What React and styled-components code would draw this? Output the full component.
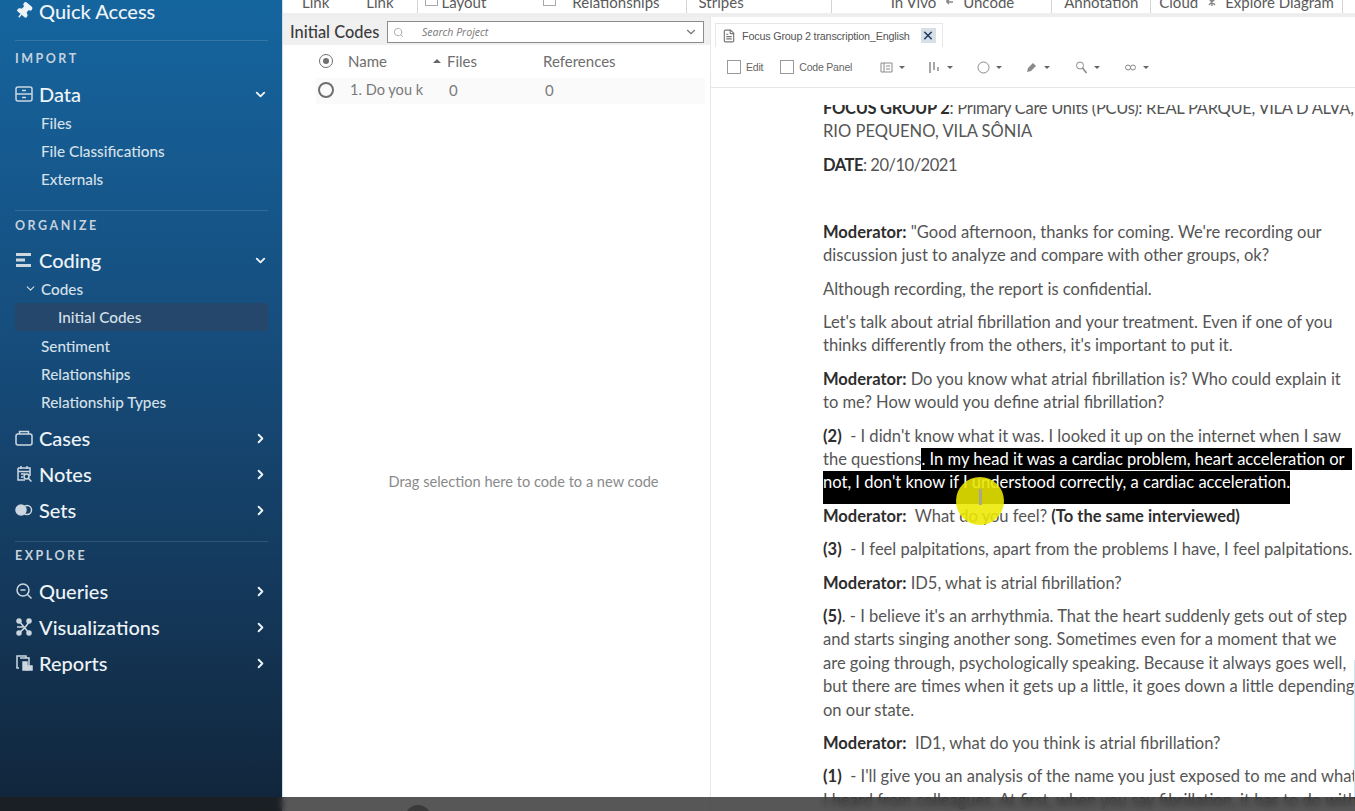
import styled, { createGlobalStyle } from 'styled-components';
import { Pin, ChevronDown, ChevronRight, Search, FileText, X } from 'lucide-react';

const GlobalStyle = createGlobalStyle`
    html, body, #root {
        margin: 0;
        height: 100%;
    }
    body {
        overflow: hidden;
        font-family: "Lato", "Liberation Sans", sans-serif;
        background: #ffffff;
    }
`;

//____________PAGE____________
const Page = styled.div`
    position: relative;
    display: flex;
    width: 1355px;
    height: 811px;
    overflow: hidden;
`;
const Workspace = styled.div`
    flex: 1;
    min-width: 0;
    display: flex;
    flex-direction: column;
    border-left: 1px solid #cddcea;
    background: #ffffff;
`;
const Panes = styled.div`
    flex: 1;
    min-height: 0;
    display: flex;
`;
const BottomBar = styled.div`
    position: absolute;
    left: 0;
    right: 0;
    bottom: 0;
    height: 14px;
    overflow: hidden;
    background: rgba(30, 30, 30, 0.745);
    backdrop-filter: blur(3px);
`;
const BarKnob = styled.span`
    position: absolute;
    left: 405px;
    top: 8px;
    width: 26px;
    height: 26px;
    border-radius: 50%;
    background: #3a3a3a;
`;
const EdgeLine = styled.div`
    position: absolute;
    right: 0;
    top: 660px;
    width: 1px;
    height: 137px;
    background: #cfe6ee;
`;
//____________PAGE____________

//____________SIDEBAR____________
const Sidebar = styled.aside`
    flex: 0 0 282px;
    height: 100%;
    box-sizing: border-box;
    padding: 0 14px 0 15px;
    background: linear-gradient(180deg, #15659f 0%, #164e7e 40%, #14395c 72%, #11253a 100%);
    color: #eef3f7;
`;
const SideList = styled.nav`
    margin-top: -7px;
`;
const MainRow = styled.div`
    display: flex;
    align-items: center;
    height: 36px;
    font-size: 20px;
    font-weight: 500;
    color: #eef3f7;
    svg.lead {
        flex: 0 0 18px;
        width: 18px;
        height: 18px;
        margin-right: 6px;
        color: #ccd7e0;
    }
    svg.pin {
        color: #eef3f7;
        transform: rotate(40deg);
    }
    svg.tail {
        margin-left: auto;
        width: 15px;
        height: 15px;
    }
`;
const Divider = styled.div`
    height: 1px;
    margin-top: ${(p) => p.$top}px;
    background: rgba(255, 255, 255, 0.13);
`;
const SectionLabel = styled.div`
    height: 18px;
    line-height: 18px;
    margin-top: ${(p) => p.$top}px;
    margin-bottom: ${(p) => p.$bottom}px;
    font-size: 12.5px;
    font-weight: 700;
    letter-spacing: 2.5px;
    color: #c4d2de;
`;
const SubList = styled.div`
    margin-top: -3.5px;
    margin-bottom: 3.5px;
`;
const SubRow = styled.div`
    display: flex;
    align-items: center;
    height: 28.4px;
    padding-left: ${(p) => p.$indent || 26}px;
    font-size: 15.3px;
    font-weight: 500;
    color: #d5e0e9;
    background: ${(p) => (p.$active ? '#24476b' : 'transparent')};
    border-radius: 2px;
    svg {
        width: 13px;
        height: 13px;
        margin-left: -17px;
        margin-right: 4px;
    }
`;
//____________SIDEBAR____________

//____________RIBBON____________
const Ribbon = styled.div`
    flex: 0 0 13px;
    display: flex;
    align-items: center;
    height: 13px;
    overflow: hidden;
    background: #ffffff;
    font-size: 15px;
    color: #5a5a5a;
`;
const RibbonItem = styled.span`
    flex: 0 0 auto;
    margin-top: -9px;
    margin-left: ${(p) => p.$left}px;
    white-space: nowrap;
`;
const RibbonRule = styled.span`
    flex: 0 0 1px;
    height: 13px;
    margin-left: ${(p) => p.$left}px;
    background: #d4d4d4;
`;
const RibbonBox = styled.span`
    flex: 0 0 11px;
    height: 11px;
    margin-top: -14px;
    margin-left: ${(p) => p.$left}px;
    border: 1px solid #aaaaaa;
`;
const RibbonGlyph = styled.svg`
    flex: 0 0 8px;
    width: 8px;
    height: 8px;
    margin-top: -9px;
    margin-left: ${(p) => p.$left}px;
    fill: none;
    stroke: #888888;
    stroke-width: 1.4;
`;
const RibbonGap = styled.div`
    flex: 0 0 4px;
    background: #eeeeee;
`;
//____________RIBBON____________

//____________CODES PANE____________
const CodesPane = styled.section`
    position: relative;
    flex: 0 0 427px;
    display: flex;
    flex-direction: column;
    border-right: 1px solid #e6e6e6;
`;
const CodesHeader = styled.div`
    display: flex;
    align-items: center;
    box-sizing: border-box;
    height: 28px;
    padding: 2px 0 0 7px;
    background: #f0f0f0;
`;
const CodesTitle = styled.span`
    flex: 0 0 97px;
    margin-top: -2px;
    font-size: 16.4px;
    font-weight: 500;
    color: #3c3c3c;
`;
const SearchBox = styled.div`
    flex: 0 0 317px;
    box-sizing: border-box;
    display: flex;
    align-items: center;
    height: 22px;
    padding: 0 5px;
    border: 1px solid #8c8c8c;
    background: #ffffff;
    color: #777777;
    font-family: "Open Sans", sans-serif;
    font-size: 10.5px;
    font-style: italic;
    svg.glass {
        width: 11px;
        height: 11px;
        margin-right: 18px;
        color: #aaaaaa;
    }
    svg.arrow {
        margin-left: auto;
        width: 14px;
        height: 14px;
    }
`;
const CodesGrid = styled.div`
    display: grid;
    grid-template-columns: 32px 99px 96px 1fr;
    align-items: center;
    box-sizing: border-box;
    width: 389px;
    height: ${(p) => p.$height}px;
    margin-left: 33px;
    padding-bottom: ${(p) => (p.$row ? 3 : 1)}px;
    font-size: 15px;
    color: ${(p) => (p.$row ? '#7a7a7a' : '#6e6e6e')};
    background: ${(p) => (p.$row ? '#fafafa' : 'transparent')};
`;
const RadioMark = styled.span`
    box-sizing: border-box;
    display: flex;
    align-items: center;
    justify-content: center;
    width: ${(p) => (p.$big ? 16 : 14)}px;
    height: ${(p) => (p.$big ? 16 : 14)}px;
    margin-left: ${(p) => (p.$big ? 2 : 3)}px;
    border: ${(p) => (p.$big ? 2 : 1)}px solid #6f6f6f;
    border-radius: 50%;
    &::after {
        content: '';
        display: ${(p) => (p.$big ? 'none' : 'block')};
        width: 6px;
        height: 6px;
        border-radius: 50%;
        background: #6f6f6f;
    }
`;
const CodeName = styled.span`
    padding-left: 2px;
    font-size: 14.6px;
    white-space: nowrap;
`;
const CountCell = styled.span`
    padding-left: 2px;
`;
const SortName = styled.span`
    display: flex;
    align-items: center;
    &::after {
        content: '';
        margin-left: 46px;
        border-left: 4px solid transparent;
        border-right: 4px solid transparent;
        border-bottom: 4px solid #666666;
    }
`;
const DropHint = styled.div`
    flex: 1;
    box-sizing: border-box;
    padding: 369px 0 0 54px;
    text-align: center;
    font-size: 14.6px;
    color: #8a8a8a;
`;
//____________CODES PANE____________

//____________DOCUMENT PANE____________
const DocPane = styled.section`
    position: relative;
    flex: 1;
    min-width: 0;
    display: flex;
    flex-direction: column;
`;
const TabBar = styled.div`
    display: flex;
    align-items: flex-end;
    height: 30px;
    padding-left: 4px;
`;
const Tab = styled.div`
    box-sizing: border-box;
    display: flex;
    align-items: center;
    width: 228px;
    height: 24px;
    padding-left: 6px;
    border: 1px solid #e6e6e6;
    border-bottom: none;
    font-family: "Liberation Sans", sans-serif;
    font-size: 10.8px;
    letter-spacing: -0.2px;
    color: #555555;
    svg {
        flex: 0 0 14px;
        width: 14px;
        height: 14px;
        margin-right: 6px;
        color: #777777;
    }
`;
const TabClose = styled.span`
    display: flex;
    align-items: center;
    justify-content: center;
    width: 15px;
    height: 15px;
    margin-left: 11px;
    background: #d9dfe7;
    svg {
        width: 13px;
        height: 13px;
        margin: 0;
        color: #1f3f68;
        stroke-width: 3;
    }
`;
const DocTools = styled.div`
    display: flex;
    align-items: center;
    box-sizing: border-box;
    height: 41px;
    padding-left: 16px;
    border-bottom: 1px solid #e6e6e6;
    font-family: "Liberation Sans", sans-serif;
    font-size: 10.5px;
    letter-spacing: -0.2px;
    color: #666666;
`;
const ToolCheck = styled.span`
    display: flex;
    align-items: center;
    margin-right: 17px;
    &::before {
        content: '';
        width: 12px;
        height: 12px;
        margin-right: 5px;
        border: 1px solid #999999;
    }
`;
const ToolIcon = styled.span`
    display: flex;
    align-items: center;
    margin-left: ${(p) => p.$left}px;
    color: #8a8a8a;
    svg {
        width: 13px;
        height: 13px;
    }
    &::after {
        content: '';
        margin-left: 6px;
        border-left: 3px solid transparent;
        border-right: 3px solid transparent;
        border-top: 3px solid #666666;
    }
`;
const DocViewport = styled.div`
    flex: 1;
    min-height: 0;
    margin-top: 17px;
    overflow: hidden;
`;
const DocBody = styled.article`
    margin-top: -8.1px;
    padding-left: 112px;
    font-size: 16.55px;
    line-height: 23.4px;
    white-space: nowrap;
    color: #555555;
    b {
        font-weight: 700;
        color: #2e2e2e;
    }
`;
const Para = styled.p`
    margin: 0 0 ${(p) => p.$after ?? 10}px;
`;
const TightLine = styled.span`
    letter-spacing: ${(p) => p.$spacing}px;
`;
const Marked = styled.span`
    display: inline-block;
    box-sizing: border-box;
    height: ${(p) => (p.$tall ? 33 : 22)}px;
    margin-bottom: ${(p) => (p.$tall ? -10 : 0)}px;
    padding-right: ${(p) => (p.$tall ? 0 : 3)}px;
    vertical-align: top;
    background: #000000;
    color: #ffffff;
`;
const Pointer = styled.div`
    position: absolute;
    left: 245px;
    top: 460px;
    width: 48px;
    height: 48px;
    border-radius: 50%;
    background: rgba(236, 232, 0, 0.88);
    &::after {
        content: '';
        position: absolute;
        left: 23px;
        top: 12px;
        width: 3px;
        height: 16px;
        background: #a8a88a;
    }
`;
//____________DOCUMENT PANE____________

const LineIcon = ({ className = 'lead', children }) => (
    <svg className={className} viewBox="0 0 18 18" fill="none" stroke="currentColor" strokeWidth="1.5">
        {children}
    </svg>
);

const DataIcon = () => (
    <LineIcon>
        <rect x="1" y="2" width="16" height="14" rx="2" />
        <path d="M1 9h16M7 5.5h4M7 12.5h4" />
    </LineIcon>
);
const CodingIcon = () => (
    <LineIcon>
        <path d="M1 3.5h15M1 9h9M1 14.5h15" strokeWidth="3" />
    </LineIcon>
);
const CasesIcon = () => (
    <LineIcon>
        <rect x="1" y="5" width="16" height="11" rx="2" />
        <path d="M4.5 5V2.5h9V5" />
    </LineIcon>
);
const NotesIcon = () => (
    <LineIcon>
        <path d="M3 3h12v8M3 3v12h7M3 6.5h12M6 1v3M12 1v3M6 9h4M6 12h2" />
        <circle cx="11.5" cy="11.5" r="2.5" />
        <path d="M13.5 13.5l3 3" />
    </LineIcon>
);
const SetsIcon = () => (
    <LineIcon>
        <circle cx="12" cy="9" r="4.5" />
        <circle cx="6" cy="9" r="5" fill="currentColor" />
    </LineIcon>
);
const QueriesIcon = () => (
    <LineIcon>
        <circle cx="8" cy="8" r="6" />
        <path d="M5.5 8h5M12.5 12.5l4 4" />
    </LineIcon>
);
const VizIcon = () => (
    <LineIcon>
        <path d="M4 3l10 12M14 3c-1 4-4 7-10 12M2 9h6" />
        <circle cx="4" cy="3" r="2" fill="currentColor" />
        <circle cx="14" cy="3" r="2" fill="currentColor" />
        <circle cx="4" cy="15" r="2" fill="currentColor" />
        <circle cx="14" cy="15" r="2" fill="currentColor" />
    </LineIcon>
);
const ReportsIcon = () => (
    <LineIcon>
        <path d="M4 14H2V2h9v2M5 4h9v10" />
        <rect x="8" y="8" width="4" height="8" fill="currentColor" />
        <rect x="12" y="12" width="5" height="4" fill="currentColor" />
    </LineIcon>
);

const Chevron = styled(ChevronRight).attrs({ className: 'tail', strokeWidth: 3 })``;
const ChevronOpen = styled(ChevronDown).attrs({ className: 'tail', strokeWidth: 3 })``;

export default function App() {
    return (
        <Page>
            <GlobalStyle />
            <Sidebar>
                <SideList>
                    <MainRow>
                        <Pin className="lead pin" fill="currentColor" />
                        Quick Access
                    </MainRow>
                    <Divider $top={11} />
                    <SectionLabel $top={9} $bottom={8}>IMPORT</SectionLabel>
                    <MainRow><DataIcon />Data<ChevronOpen /></MainRow>
                    <SubList>
                        <SubRow>Files</SubRow>
                        <SubRow>File Classifications</SubRow>
                        <SubRow>Externals</SubRow>
                    </SubList>
                    <Divider $top={16.5} />
                    <SectionLabel $top={6} $bottom={7}>ORGANIZE</SectionLabel>
                    <MainRow><CodingIcon />Coding<ChevronOpen /></MainRow>
                    <SubList>
                        <SubRow><ChevronDown />Codes</SubRow>
                        <SubRow $active $indent={43}>Initial Codes</SubRow>
                        <SubRow>Sentiment</SubRow>
                        <SubRow>Relationships</SubRow>
                        <SubRow>Relationship Types</SubRow>
                    </SubList>
                    <MainRow><CasesIcon />Cases<Chevron /></MainRow>
                    <MainRow><NotesIcon />Notes<Chevron /></MainRow>
                    <MainRow><SetsIcon />Sets<Chevron /></MainRow>
                    <Divider $top={13} />
                    <SectionLabel $top={5} $bottom={8}>EXPLORE</SectionLabel>
                    <MainRow><QueriesIcon />Queries<Chevron /></MainRow>
                    <MainRow><VizIcon />Visualizations<Chevron /></MainRow>
                    <MainRow><ReportsIcon />Reports<Chevron /></MainRow>
                </SideList>
            </Sidebar>

            <Workspace>
                <Ribbon>
                    <RibbonItem $left={19}>Link</RibbonItem>
                    <RibbonItem $left={37}>Link</RibbonItem>
                    <RibbonRule $left={23} />
                    <RibbonBox $left={7} />
                    <RibbonItem $left={4}>Layout</RibbonItem>
                    <RibbonBox $left={57} />
                    <RibbonItem $left={16}>Relationships</RibbonItem>
                    <RibbonRule $left={26} />
                    <RibbonItem $left={12}>Stripes</RibbonItem>
                    <RibbonRule $left={87} />
                    <RibbonItem $left={59}>In Vivo</RibbonItem>
                    <RibbonGlyph $left={10} viewBox="0 0 8 8"><path d="M1 1v3h6M3 2L1 4l2 2" /></RibbonGlyph>
                    <RibbonItem $left={9}>Uncode</RibbonItem>
                    <RibbonRule $left={37} />
                    <RibbonItem $left={12}>Annotation</RibbonItem>
                    <RibbonRule $left={12} />
                    <RibbonItem $left={8}>Cloud</RibbonItem>
                    <RibbonGlyph $left={10} viewBox="0 0 8 8"><path d="M1 1l6 6M7 1L1 7M4 0v8" /></RibbonGlyph>
                    <RibbonItem $left={9}>Explore Diagram</RibbonItem>
                    <RibbonRule $left={8} />
                </Ribbon>
                <RibbonGap />
                <Panes>
                    <CodesPane>
                        <CodesHeader>
                            <CodesTitle>Initial Codes</CodesTitle>
                            <SearchBox>
                                <Search className="glass" />
                                Search Project
                                <ChevronDown className="arrow" />
                            </SearchBox>
                        </CodesHeader>
                        <CodesGrid $height={33}>
                            <RadioMark />
                            <SortName>Name</SortName>
                            <span>Files</span>
                            <span>References</span>
                        </CodesGrid>
                        <CodesGrid $height={26} $row>
                            <RadioMark $big />
                            <CodeName>1. Do you k</CodeName>
                            <CountCell>0</CountCell>
                            <CountCell>0</CountCell>
                        </CodesGrid>
                        <DropHint>Drag selection here to code to a new code</DropHint>
                    </CodesPane>

                    <DocPane>
                        <TabBar>
                            <Tab>
                                <FileText />
                                Focus Group 2 transcription_English
                                <TabClose><X /></TabClose>
                            </Tab>
                        </TabBar>
                        <DocTools>
                            <ToolCheck>Edit</ToolCheck>
                            <ToolCheck>Code Panel</ToolCheck>
                            <ToolIcon $left={11}>
                                <svg viewBox="0 0 13 13" fill="none" stroke="currentColor">
                                    <path d="M1 2h11v9H1zM4 2v9M6 5h4M6 8h4" />
                                </svg>
                            </ToolIcon>
                            <ToolIcon $left={23}>
                                <svg viewBox="0 0 13 13" fill="none" stroke="currentColor" strokeWidth="1.5">
                                    <path d="M2 1v11M6 1v8M10 6v4" />
                                </svg>
                            </ToolIcon>
                            <ToolIcon $left={24}>
                                <svg viewBox="0 0 13 13" fill="none" stroke="currentColor">
                                    <circle cx="6.5" cy="6.5" r="5.5" />
                                </svg>
                            </ToolIcon>
                            <ToolIcon $left={23}>
                                <svg viewBox="0 0 13 13" fill="currentColor">
                                    <path d="M2 11l1-4 5-5 3 3-5 5z" />
                                </svg>
                            </ToolIcon>
                            <ToolIcon $left={25}>
                                <svg viewBox="0 0 13 13" fill="none" stroke="currentColor">
                                    <circle cx="5" cy="4.5" r="3.5" />
                                    <path d="M7.5 7l4 5" strokeWidth="1.6" />
                                </svg>
                            </ToolIcon>
                            <ToolIcon $left={24}>
                                <svg viewBox="0 0 13 13" fill="none" stroke="currentColor">
                                    <circle cx="4" cy="6.5" r="2.5" />
                                    <circle cx="9" cy="6.5" r="2.5" />
                                </svg>
                            </ToolIcon>
                        </DocTools>
                        <DocViewport>
                            <DocBody>
                                <Para $after={10}>
                                    <TightLine $spacing={-0.3}><b>FOCUS GROUP 2</b>: Primary Care Units (PCUs): REAL PARQUE, VILA D ALVA,</TightLine><br />
                                    RIO PEQUENO, VILA SÔNIA
                                </Para>
                                <Para $after={43.6}><TightLine $spacing={-0.5}><b>DATE</b>: 20/10/2021</TightLine></Para>
                                <Para>
                                    <b>Moderator:</b> "Good afternoon, thanks for coming. We're recording our<br />
                                    discussion just to analyze and compare with other groups, ok?
                                </Para>
                                <Para>Although recording, the report is confidential.</Para>
                                <Para>
                                    Let's talk about atrial fibrillation and your treatment. Even if one of you<br />
                                    thinks differently from the others, it's important to put it.
                                </Para>
                                <Para>
                                    <b>Moderator:</b> Do you know what atrial fibrillation is? Who could explain it<br />
                                    to me? How would you define atrial fibrillation?
                                </Para>
                                <Para>
                                    <b>(2)</b>&nbsp; - I didn't know what it was. I looked it up on the internet when I saw<br />
                                    the questions<Marked>. In my head it was a cardiac problem, heart acceleration or&nbsp;</Marked><br />
                                    <Marked $tall>not, I don't know if I understood correctly, a cardiac acceleration.</Marked>
                                </Para>
                                <Para><b>Moderator:</b>&nbsp; What do you feel? <b>(To the same interviewed)</b></Para>
                                <Para><b>(3)</b>&nbsp; - I feel palpitations, apart from the problems I have, I feel palpitations.</Para>
                                <Para><b>Moderator:</b> ID5, what is atrial fibrillation?</Para>
                                <Para>
                                    <b>(5)</b>. - I believe it's an arrhythmia. That the heart suddenly gets out of step<br />
                                    and starts singing another song. Sometimes even for a moment that we<br />
                                    are going through, psychologically speaking. Because it always goes well,<br />
                                    but there are times when it gets up a little, it goes down a little depending<br />
                                    on our state.
                                </Para>
                                <Para><b>Moderator:</b>&nbsp; ID1, what do you think is atrial fibrillation?</Para>
                                <Para>
                                    <b>(1)</b>&nbsp; - I'll give you an analysis of the name you just exposed to me and what<br />
                                    I heard from colleagues. At first, when you say fibrillation, it has to do with
                                </Para>
                            </DocBody>
                        </DocViewport>
                        <Pointer />
                    </DocPane>
                </Panes>
            </Workspace>
            <EdgeLine />
            <BottomBar><BarKnob /></BottomBar>
        </Page>
    );
}
